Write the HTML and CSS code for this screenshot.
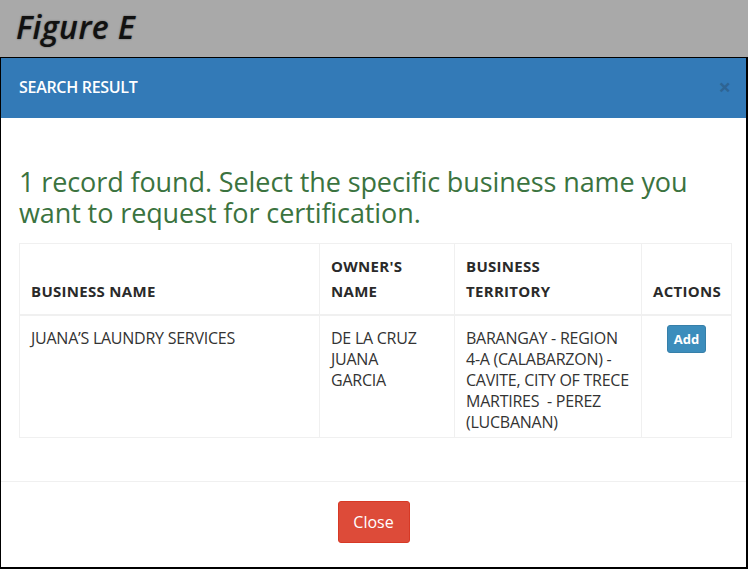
FILE: index.html
```html
<!DOCTYPE html>
<html>
<head>
<meta charset="utf-8">
<link rel="stylesheet" href="styles.css">
</head>
<body>
<div class="figure-bar"><span class="figure-title">Figure E</span></div>
<div class="modal">
  <div class="modal-header">
    <span class="modal-title">SEARCH RESULT</span>
    <span class="close-x">×</span>
  </div>
  <div class="modal-body">
    <h2 class="found">1 record found. Select the specific business name you want to request for certification.</h2>
    <table class="results">
      <colgroup>
        <col class="c1"><col class="c2"><col class="c3"><col class="c4">
      </colgroup>
      <thead>
        <tr>
          <th>BUSINESS NAME</th>
          <th>OWNER'S NAME</th>
          <th class="narrow">BUSINESS TERRITORY</th>
          <th class="center">ACTIONS</th>
        </tr>
      </thead>
      <tbody>
        <tr>
          <td>JUANA’S LAUNDRY SERVICES</td>
          <td class="owner">DE LA CRUZ JUANA GARCIA</td>
          <td>BARANGAY - REGION 4-A (CALABARZON) - CAVITE, CITY OF TRECE MARTIRES &nbsp;- PEREZ (LUCBANAN)</td>
          <td class="center"><span class="btn-add">Add</span></td>
        </tr>
      </tbody>
    </table>
  </div>
  <div class="modal-footer">
    <span class="btn-close">Close</span>
  </div>
</div>
</body>
</html>
```
FILE: styles.css
```css
html, body {
  margin: 0;
  padding: 0;
}
body {
  background: #a9a9a9;
  font-family: "Open Sans", "Liberation Sans", sans-serif;
  width: 748px;
  height: 569px;
  overflow: hidden;
}
.figure-bar {
  height: 57px;
  display: flex;
  align-items: center;
  padding-left: 16px;
}
.figure-title {
  font-style: italic;
  font-weight: 600;
  font-size: 32px;
  line-height: 1;
  margin-top: -4px;
  color: #111;
  text-shadow: 0 0 2px rgba(0,0,0,0.45);
  letter-spacing: 0.4px;
}
.modal {
  background: #fff;
  border-top: 1px solid #000;
  border-left: 1px solid #000;
  border-right: 2px solid #000;
  border-bottom: 2px solid #000;
  height: 509px;
  display: flex;
  flex-direction: column;
}
.modal-header {
  background: #337ab7;
  height: 60px;
  display: flex;
  align-items: center;
  justify-content: space-between;
  padding: 0 15px 0 18px;
}
.modal-title {
  color: #fff;
  font-weight: 600;
  font-size: 16px;
  letter-spacing: -0.3px;
  margin-top: -2px;
}
.close-x {
  color: #2e6494;
  font-size: 22px;
  font-weight: 700;
  line-height: 1;
  margin-top: -4px;
}
.modal-body {
  flex: 1;
  padding: 48px 15px 0 18px;
}
.found {
  margin: 0 0 15px 0;
  max-width: 700px;
  font-weight: 400;
  font-size: 27px;
  line-height: 31px;
  color: #3b7340;
  letter-spacing: -0.1px;
}
.results {
  border-collapse: collapse;
  table-layout: fixed;
  width: 712px;
  border: 1px solid #f0f0f0;
}
.c1 { width: 300px; }
.c2 { width: 135px; }
.c3 { width: 187px; }
.c4 { width: 90px; }
.results th {
  text-align: left;
  vertical-align: bottom;
  font-size: 15px;
  font-weight: 700;
  color: #2a2a2a;
  line-height: 25px;
  padding: 10px 11px 10px 11px;
  border-left: 1px solid #f0f0f0;
  border-bottom: 2px solid #f0f0f0;
  letter-spacing: 0.3px;
}
.results th.narrow {
  padding-right: 18px;
}
.results td {
  vertical-align: top;
  font-size: 16px;
  color: #333;
  line-height: 21px;
  padding: 12px 8px 4px 11px;
  border-left: 1px solid #f0f0f0;
  letter-spacing: -0.25px;
}
.results td.owner {
  padding-right: 24px;
}
.results .center {
  text-align: center;
  padding-left: 11px;
  padding-right: 11px;
}
.btn-add {
  display: inline-block;
  background: #3c8dbc;
  color: #fff;
  font-size: 13px;
  font-weight: 700;
  line-height: 18px;
  padding: 4px 6px 4px;
  border-radius: 3px;
  border: 1px solid #367fa9;
  letter-spacing: 0;
  margin-top: -3px;
}
.modal-footer {
  border-top: 1px solid #f0f0f0;
  height: 86px;
  display: flex;
  justify-content: center;
  padding-top: 19px;
  box-sizing: border-box;
}
.btn-close {
  display: inline-flex;
  align-items: center;
  justify-content: center;
  width: 72px;
  height: 42px;
  box-sizing: border-box;
  background: #dd4b39;
  border: 1px solid #d73925;
  border-radius: 3px;
  color: #fff;
  font-size: 16px;
}
```
